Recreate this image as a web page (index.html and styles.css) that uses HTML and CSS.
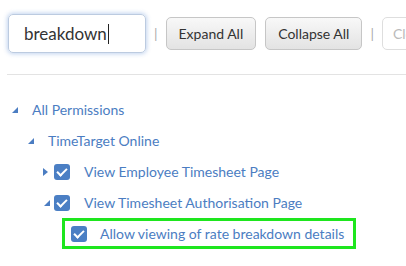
FILE: index.html
```html
<!DOCTYPE html>
<html lang="en">
<head>
    <meta charset="UTF-8">
    <meta name="viewport" content="width=device-width, initial-scale=1.0">
    <title>Permissions</title>
    <link rel="stylesheet" href="styles.css">
</head>
<body>
    <div class="toolbar">
        <div class="search focused">breakdown<span class="caret"></span></div>
        <span class="sep">|</span>
        <button class="btn">Expand All</button>
        <button class="btn">Collapse All</button>
        <span class="sep">|</span>
        <div class="search other"><span class="placeholder">Clear</span></div>
    </div>
    <div class="rule"></div>

    <!-- Permission tree -->
    <ul class="tree">
        <li>
            <div class="node"><span class="toggle open"></span><span class="label">All Permissions</span></div>
            <ul>
                <li>
                    <div class="node"><span class="toggle open"></span><span class="label">TimeTarget Online</span></div>
                    <ul>
                        <li>
                            <div class="node"><span class="toggle closed"></span><span class="check"></span><span class="label">View Employee Timesheet Page</span></div>
                        </li>
                        <li>
                            <div class="node"><span class="toggle open"></span><span class="check"></span><span class="label">View Timesheet Authorisation Page</span></div>
                            <ul>
                                <li>
                                    <div class="node leaf"><span class="match"><span class="check"></span><span class="label">Allow viewing of rate breakdown details</span></span></div>
                                </li>
                            </ul>
                        </li>
                    </ul>
                </li>
            </ul>
        </li>
    </ul>
</body>
</html>
```

FILE: styles.css
```css
body {
    margin: 0;
    font-family: Lato, "Open Sans", sans-serif;
    background: #fff;
    overflow: hidden;
}
.toolbar {
    display: flex;
    align-items: center;
    padding: 14px 0 0 8px;
    white-space: nowrap;
}
.toolbar > * {
    flex-shrink: 0;
}
.search {
    box-sizing: border-box;
    height: 39px;
    border: 1px solid #d6dde6;
    border-radius: 5px;
    font-size: 17px;
    color: #333;
    display: flex;
    align-items: center;
    padding-left: 15px;
}
.search.focused {
    width: 138px;
    border-color: #bccbe0;
    box-shadow: 0 0 4px 1px rgba(120, 160, 220, 0.45);
}
.caret {
    display: inline-block;
    width: 1px;
    height: 20px;
    background: #222;
    margin-left: 1px;
}
.search.other {
    width: 80px;
    height: 33px;
    border-color: #dedede;
    padding-left: 10px;
    font-size: 14px;
}
.placeholder {
    color: #bbb;
}
.sep {
    color: #aaa;
    font-size: 14px;
    margin: 0 8px 0 8px;
}
.btn {
    height: 33px;
    padding: 0 12px;
    margin-right: 9px;
    font-family: Lato, "Open Sans", sans-serif;
    font-size: 14px;
    color: #333;
    background: linear-gradient(#f8f8f8, #e3e3e3);
    border: 1px solid #c6c6c6;
    border-radius: 5px;
}
.btn:last-of-type {
    margin-right: 0;
}
.rule {
    margin: 21px 0 0 7px;
    border-top: 1px solid #e3e3e3;
}
.tree, .tree ul {
    list-style: none;
    margin: 0;
    padding: 0 0 0 16px;
}
.tree {
    padding-left: 10px;
    margin-top: 19px;
}
.node {
    display: flex;
    align-items: center;
    height: 31px;
    font-size: 14px;
    color: #4b7dc2;
}
.toggle {
    width: 12px;
    height: 12px;
    position: relative;
    flex-shrink: 0;
}
.toggle.open::before {
    content: "";
    position: absolute;
    left: 2px;
    top: 3px;
    border-style: solid;
    border-width: 0 0 6px 6px;
    border-color: transparent transparent #4b7dc2 transparent;
}
.toggle.closed::before {
    content: "";
    position: absolute;
    left: 1px;
    top: 2px;
    border-style: solid;
    border-width: 4px 0 4px 5px;
    border-color: transparent transparent transparent #4b7dc2;
}
.label {
    margin-left: 10px;
}
.check + .label {
    margin-left: 14px;
}
.check {
    width: 16px;
    height: 16px;
    border-radius: 3px;
    background: #4b7fc4;
    position: relative;
    flex-shrink: 0;
}
.check::after {
    content: "";
    position: absolute;
    left: 5px;
    top: 2px;
    width: 4px;
    height: 8px;
    border: solid #fff;
    border-width: 0 2px 2px 0;
    transform: rotate(45deg);
}
.node.leaf {
    height: auto;
}
.match {
    display: flex;
    align-items: center;
    height: 25px;
    margin-left: 4px;
    padding: 0 9px 0 6px;
    border: 3px solid #1ee61e;
}
.match .check + .label {
    margin-left: 13px;
}
```
